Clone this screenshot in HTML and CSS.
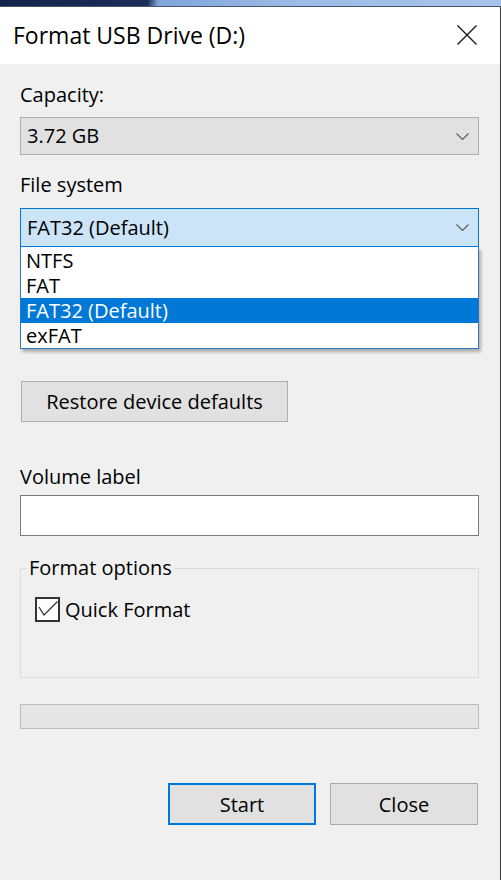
FILE: index.html
```html
<!DOCTYPE html>
<html lang="en">
<head>
<meta charset="utf-8">
<title>Format USB Drive (D:)</title>
<link rel="stylesheet" href="styles.css">
</head>
<body>
<div class="desktop"></div>
<div class="desktop-edge"></div>
<div class="window">
  <div class="titlebar">
    <span class="title">Format USB Drive (D:)</span>
    <svg class="close" width="20" height="20" viewBox="0 0 20 20" aria-hidden="true">
      <path d="M0.5 0.5 L19.5 19.5 M19.5 0.5 L0.5 19.5" fill="none" stroke="#1a1a1a" stroke-width="1.4"/>
    </svg>
  </div>
  <div class="content">
    <div class="label">Capacity:</div>
    <div class="select">
      <span>3.72 GB</span>
      <svg class="chev" width="13" height="7" viewBox="0 0 13 7" aria-hidden="true"><path d="M0.5 0.5 L6.5 6.5 L12.5 0.5" fill="none" stroke="#5a5a5a" stroke-width="1.1"/></svg>
    </div>
    <div class="label label-fs">File system</div>
    <div class="select-wrap">
      <div class="select focused">
        <span>FAT32 (Default)</span>
        <svg class="chev" width="13" height="7" viewBox="0 0 13 7" aria-hidden="true"><path d="M0.5 0.5 L6.5 6.5 L12.5 0.5" fill="none" stroke="#5a5a5a" stroke-width="1.1"/></svg>
      </div>
      <ul class="dropdown">
        <li>NTFS</li>
        <li>FAT</li>
        <li class="selected">FAT32 (Default)</li>
        <li>exFAT</li>
      </ul>
    </div>
    <button class="btn restore">Restore device defaults</button>
    <div class="label label-vol">Volume label</div>
    <div class="input"></div>
    <fieldset class="group">
      <legend>Format options</legend>
      <div class="check">
        <span class="box">
          <svg width="21" height="21" viewBox="0 0 21 21" aria-hidden="true"><path d="M2 8 L7 16 L20.5 2.5" fill="none" stroke="#333" stroke-width="1.3"/></svg>
        </span>
        <span>Quick Format</span>
      </div>
    </fieldset>
    <div class="progress"></div>
    <div class="actions">
      <button class="btn primary">Start</button>
      <button class="btn">Close</button>
    </div>
  </div>
</div>
</body>
</html>
```

FILE: styles.css
```css
html, body {
  margin: 0;
  padding: 0;
}
body {
  background: #f0f0f0;
  font-family: "Open Sans", "Noto Sans", sans-serif;
  font-size: 20px;
  color: #000;
  overflow: hidden;
}
.desktop {
  height: 6px;
  background: linear-gradient(100deg, #14234a 0, #1d2d58 146px, #7fa5da 156px, #9dbde8 300px, #a6c4ec 100%);
}
.desktop-edge {
  height: 1px;
  background: #46556a;
}
.window {
  height: 873px;
  box-sizing: border-box;
  border-right: 1px solid #3a3a3a;
  background: #f0f0f0;
}
.titlebar {
  height: 57px;
  background: #fff;
  display: flex;
  align-items: center;
  justify-content: space-between;
  padding: 0 23px 0 13px;
}
.title {
  font-size: 23px;
  margin-top: -1px;
}
.close {
  display: block;
  margin-top: -2px;
}
.content {
  padding: 19px 21px 0 20px;
}
.label {
  line-height: 24px;
  height: 24px;
  margin-bottom: 10px;
}
.label-fs {
  margin-top: 18px;
  margin-bottom: 11px;
}
.select {
  height: 38px;
  box-sizing: border-box;
  border: 1px solid #adadad;
  background: #e1e1e1;
  display: flex;
  align-items: center;
  justify-content: space-between;
  padding: 0 9px 0 6px;
  line-height: 36px;
}
.chev {
  display: block;
}
.select-wrap {
  position: relative;
}
.select.focused {
  height: 39px;
  border-color: #0078d7;
  background: #cce4f7;
}
.dropdown {
  position: absolute;
  left: 0;
  right: 0;
  top: 100%;
  margin: 0;
  padding: 1px 0 0;
  list-style: none;
  background: #fff;
  border: 1px solid #2b79c2;
  border-top: none;
  box-shadow: 2px 3px 3px rgba(0, 0, 0, 0.28);
}
.dropdown li {
  height: 25px;
  line-height: 25px;
  padding-left: 5px;
}
.dropdown li.selected {
  background: #0078d7;
  color: #fff;
}
.btn {
  font-family: inherit;
  font-size: inherit;
  color: #000;
  background: #e1e1e1;
  border: 1px solid #adadad;
  padding: 0;
  margin: 0;
  box-sizing: border-box;
  display: block;
}
.restore {
  margin-top: 134px;
  margin-left: 1px;
  width: 267px;
  height: 41px;
}
.label-vol {
  margin-top: 43px;
  margin-bottom: 6px;
}
.input {
  height: 41px;
  box-sizing: border-box;
  border: 1px solid #7a7a7a;
  background: #fff;
}
.group {
  margin: 20px 0 0;
  padding: 17px 0 55px 14px;
  border: 1px solid #dcdcdc;
  min-width: 0;
}
.group legend {
  line-height: 24px;
  padding: 0 2px;
  margin-left: -8px;
}
.check {
  display: flex;
  align-items: center;
  height: 25px;
}
.box {
  width: 25px;
  height: 25px;
  box-sizing: border-box;
  border: 2px solid #333;
  background: #fff;
  margin-right: 5px;
}
.box svg {
  display: block;
}
.progress {
  margin-top: 26px;
  height: 25px;
  box-sizing: border-box;
  border: 1px solid #bcbcbc;
  background: #e6e6e6;
}
.actions {
  margin-top: 54px;
  display: flex;
  justify-content: flex-end;
  gap: 14px;
  padding-right: 1px;
}
.actions .btn {
  width: 148px;
  height: 42px;
}
.btn.primary {
  border: 2px solid #0078d7;
}
```
